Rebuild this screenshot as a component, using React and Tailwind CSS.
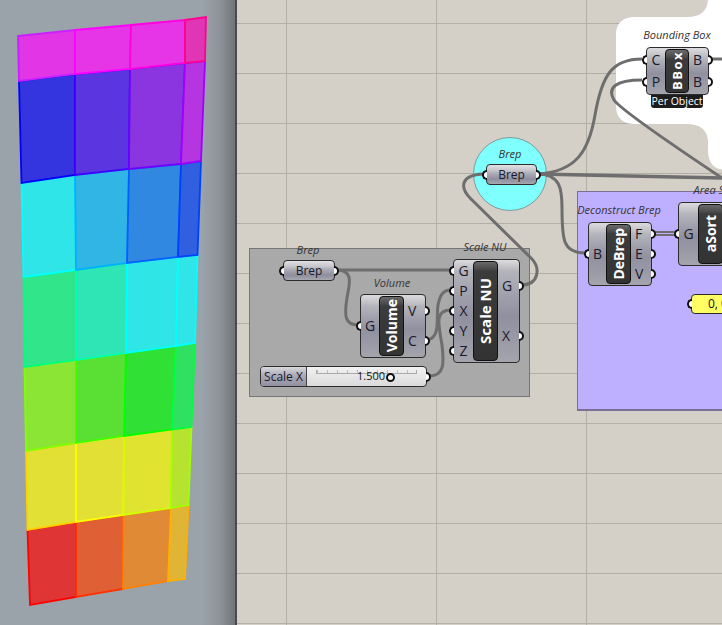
import React from "react";

// surface points, one row of 5 per grid line, top to bottom
const grid = [
  [[18, 36], [75, 30], [131, 25], [185, 20], [206, 17]],
  [[19, 81], [75, 74], [130, 69], [185, 63], [205, 61]],
  [[21.5, 183], [75, 175], [129, 169], [181, 164], [201, 161]],
  [[23.5, 277], [76, 270], [127, 263], [178, 257], [197.5, 255]],
  [[24.5, 367], [76, 360], [126, 353], [176, 346], [195, 343]],
  [[26, 451], [76, 443], [124, 436], [172, 429.5], [191.5, 427]],
  [[27.5, 530], [76, 522], [123.5, 515], [171, 508], [188.5, 505]],
  [[30, 605], [76, 597], [123, 589], [168, 581], [185, 579]],
];

const fills = [
  ["#e135e6", "#e535e6", "#e535e6", "#e035b5"],
  ["#3535e0", "#5a35e0", "#8a35e0", "#b535e0"],
  ["#30e5e8", "#30b5e5", "#3088e0", "#3060e0"],
  ["#30e58a", "#30e5b5", "#30e5e5", "#30e5e8"],
  ["#8ae535", "#5ae035", "#30e035", "#30e060"],
  ["#e3e035", "#e3e035", "#e0e330", "#b5e330"],
  ["#e03535", "#e06035", "#e08a35", "#e0b535"],
];

const strokes = [
  ["#c820ff", "#ff00ff", "#ff00e0", "#ff0090"],
  ["#0000ff", "#4000ff", "#7000ff", "#a000ff"],
  ["#00ffff", "#00b0ff", "#0060ff", "#0040ff"],
  ["#00ff80", "#00ffb0", "#00ffff", "#00ffff"],
  ["#80ff00", "#40ff00", "#00ff00", "#00ff40"],
  ["#ffd000", "#ffff00", "#d0ff00", "#a0ff00"],
  ["#ff0000", "#ff3000", "#ff8000", "#ffb000"],
];

const Surface = () => {
  const rows = [6, 5, 4, 3, 2, 1, 0];
  return (
    <svg width="235" height="625" className="block">
      {rows.map((r) =>
        [0, 1, 2, 3].map((c) => {
          const pts = [grid[r][c], grid[r][c + 1], grid[r + 1][c + 1], grid[r + 1][c]];
          return (
            <polygon
              key={r + "-" + c}
              points={pts.map((p) => p.join(",")).join(" ")}
              fill={fills[r][c]}
              stroke={strokes[r][c]}
              strokeWidth="1.8"
            />
          );
        })
      )}
    </svg>
  );
};

const Port = ({ side }) => (
  <span
    className={
      side === "l"
        ? "absolute -left-[5px] top-1/2 -translate-y-1/2 w-[5px] h-[10px] rounded-l-full bg-white border-2 border-r-0 border-[#111]"
        : "absolute -right-[5px] top-1/2 -translate-y-1/2 w-[5px] h-[10px] rounded-r-full bg-white border-2 border-l-0 border-[#111]"
    }
  />
);

const Row = ({ label, side }) => (
  <div
    className={
      side === "l"
        ? "relative flex-1 flex items-center justify-center"
        : "relative flex-1 flex items-center justify-start pl-[4px]"
    }
  >
    <span>{label}</span>
    <Port side={side} />
  </div>
);

const body =
  "bg-[linear-gradient(to_bottom,#dcdce0_0px,#c4c4c8_7px,#b4b4bc_11px,#9090a0_55%,#a4a4ac_100%)] border border-[#2c2c2c] rounded-[4px]";

const Comp = ({ name, inputs, outputs, className, leftClass, pillClass, textClass }) => (
  <div className={"absolute flex text-[14px] leading-none text-[#1a1a2a] " + body + " " + className}>
    <div className={"shrink-0 flex flex-col py-px " + leftClass}>
      {inputs.map((l) => (
        <Row key={l} label={l} side="l" />
      ))}
    </div>
    <div
      className={
        "shrink-0 my-px flex items-center justify-center rounded-[4px] border border-[#111] bg-[linear-gradient(to_bottom,#6a6a6a_0px,#4a4a4a_7px,#3c3c3c_9px,#333_100%)] text-white font-bold " +
        pillClass
      }
    >
      <span className={"[writing-mode:vertical-rl] rotate-180 " + textClass}>{name}</span>
    </div>
    <div className="flex-1 flex flex-col py-px">
      {outputs.map((l, i) => (
        <Row key={l + i} label={l} side="r" />
      ))}
    </div>
  </div>
);

const Param = ({ name, className }) => (
  <div
    className={
      "absolute flex items-center justify-center text-[12px] leading-none text-[#1a1a2a] border border-[#2c2c2c] rounded-[4px] bg-[linear-gradient(to_bottom,#e2e2e6_0px,#c8c8cc_5px,#a8a8b6_9px,#8e8e9e_75%,#a8a8b0_100%)] " +
      className
    }
  >
    {name}
    <Port side="l" />
    <Port side="r" />
  </div>
);

const Label = ({ children, className }) => (
  <div className={"absolute italic text-[11px] leading-none text-[#333] whitespace-nowrap -translate-x-1/2 " + className}>
    {children}
  </div>
);

const Wires = () => (
  <svg width="485" height="625" className="absolute inset-0" fill="none" stroke="#6e6e6e" strokeWidth="3">
    {/* coords are page x minus 237 */}
    <path d="M99 270 L214 270" />
    <path d="M99 270 C118 270 112 285 110 298 C107 316 108 325 121 325" />
    <path d="M190 340 C204 338 199 318 201 305 C203 295 206 290 214 290" />
    <path d="M192 376 C208 376 207 362 205 345 C201 322 198 310 214 310" />
    <path d="M284 285 C302 285 304 268 294 258 L234 199 C222 187 224 175 246 174" />
    <path d="M300 174 C324 174 325 190 325 208 C325 240 326 253 348 253" />
    <path d="M300 174 C340 172 352 150 358 115 C365 75 375 59 405 59" />
    <path d="M300 174 L485 178" strokeWidth="3.5" />
    <path d="M405 80 C378 80 370 88 377 100 C384 110 440 148 485 178" />
    <path d="M474 59 L485 59" />
    <path d="M416 232 L438 232" strokeWidth="2" />
    <path d="M416 235 L438 235" strokeWidth="2" />
  </svg>
);

const Slider = () => (
  <div className="absolute left-[23px] top-[366px] w-[167px] h-[21px] flex text-[12px] leading-none text-[#1a1a2a] border border-[#2c2c2c] rounded-[4px] bg-[linear-gradient(to_bottom,#f2f2f2,#dadada)]">
    <div className="w-[46px] flex items-center justify-center rounded-l-[3px] border-r border-[#444] bg-[linear-gradient(to_bottom,#d8d8dc_0px,#a8a8b6_9px,#9090a0_100%)]">
      Scale X
    </div>
    <div className="relative flex-1">
      <div className="absolute left-[9px] right-[9px] top-[3px] h-[4px] border-b border-x border-[#aaa] bg-[repeating-linear-gradient(to_right,#bbb_0px,#bbb_1px,transparent_1px,transparent_10px)]" />
      <span className="absolute left-[50px] top-[3px] text-[11px] text-[#111]">1.500</span>
      <span className="absolute left-[79px] top-[6px] w-[9px] h-[9px] rounded-full bg-white border-2 border-[#111]" />
    </div>
    <Port side="r" />
  </div>
);

export default function App() {
  return (
    <div className="flex w-[722px] h-[625px] overflow-hidden font-['Open_Sans',sans-serif]">
      <div className="w-[235px] shrink-0 bg-[linear-gradient(to_right,#9aa2aa_0%,#9aa2aa_86%,#8d9299_94%,#6f7479_100%)]">
        <Surface />
      </div>
      <div className="w-[2px] shrink-0 bg-[#4a4a4a]" />
      <div className="relative flex-1 overflow-hidden bg-[#d4d0c8] bg-[linear-gradient(to_right,#b2afa7_1px,transparent_1px),linear-gradient(to_bottom,#b2afa7_1px,transparent_1px)] bg-[size:150px_50px] bg-[position:49px_23px]">
        {/* white group behind bounding box */}
        <svg width="485" height="200" className="absolute left-0 top-0">
          <path
            d="M471 -2 C471 10 465 17 450 17 L398 17 C385 17 379 24 379 34 L379 106 C379 118 386 124 398 124 L450 124 C463 124 471 130 471 142 L471 150 C471 162 476 170 490 170 L490 -2 Z"
            fill="#fff"
          />
        </svg>
        {/* groups */}
        <div className="absolute left-[12px] top-[248px] w-[281px] h-[149px] bg-[#a9a9a9] border border-[#767676]" />
        <div className="absolute left-[340px] top-[191px] w-[160px] h-[220px] bg-[#bfb0ff] border border-b-2 border-[#7a7096]" />
        <div className="absolute left-[236px] top-[137px] w-[74px] h-[74px] rounded-full bg-[#80ffff] border border-[#7c9c9c]" />

        <Wires />

        <Label className="left-[273px] top-[148px]">Brep</Label>
        <Param name="Brep" className="left-[249px] top-[164px] w-[51px] h-[21px]" />

        <Label className="left-[71px] top-[244px]">Brep</Label>
        <Param name="Brep" className="left-[46px] top-[260px] w-[52px] h-[21px]" />

        <Label className="left-[155px] top-[277px]">Volume</Label>
        <Comp
          name="Volume"
          inputs={["G"]}
          outputs={["V", "C"]}
          className="left-[123px] top-[294px] w-[66px] h-[64px]"
          leftClass="w-[18px]"
          pillClass="w-[25px]"
          textClass="text-[14px]"
        />

        <Label className="left-[248px] top-[241px]">Scale NU</Label>
        <Comp
          name="Scale NU"
          inputs={["G", "P", "X", "Y", "Z"]}
          outputs={["G", "X"]}
          className="left-[216px] top-[259px] w-[67px] h-[104px]"
          leftClass="w-[19px]"
          pillClass="w-[25px]"
          textClass="text-[15px]"
        />

        <Slider />

        <Label className="left-[382px] top-[204px] text-[10.5px]">Deconstruct Brep</Label>
        <Comp
          name="DeBrep"
          inputs={["B"]}
          outputs={["F", "E", "V"]}
          className="left-[351px] top-[222px] w-[64px] h-[64px]"
          leftClass="w-[17px]"
          pillClass="w-[25px]"
          textClass="text-[14px]"
        />

        <Label className="left-[479px] top-[184px]">Area Sort</Label>
        <Comp
          name="aSort"
          inputs={["G"]}
          outputs={[]}
          className="left-[441px] top-[202px] w-[66px] h-[64px]"
          leftClass="w-[19px]"
          pillClass="w-[25px]"
          textClass="text-[14px]"
        />

        <div className="absolute left-[454px] top-[294px] w-[60px] h-[20px] flex items-center pl-[16px] text-[12px] leading-none text-[#111] border border-[#2c2c2c] rounded-[4px] bg-[#ffff64]">
          0, 0
          <Port side="l" />
        </div>

        <Label className="left-[440px] top-[29px]">Bounding Box</Label>
        <Comp
          name="BBox"
          inputs={["C", "P"]}
          outputs={["B", "B"]}
          className="left-[409px] top-[47px] w-[63px] h-[48px]"
          leftClass="w-[18px]"
          pillClass="w-[24px]"
          textClass="text-[13px] tracking-[1.5px]"
        />
        <div className="absolute left-[414px] top-[95px] w-[52px] h-[13px] rounded-b-[3px] bg-[#1c1c1c] flex items-center justify-center text-[10.5px] leading-none text-white">
          Per Object
        </div>
      </div>
    </div>
  );
}
